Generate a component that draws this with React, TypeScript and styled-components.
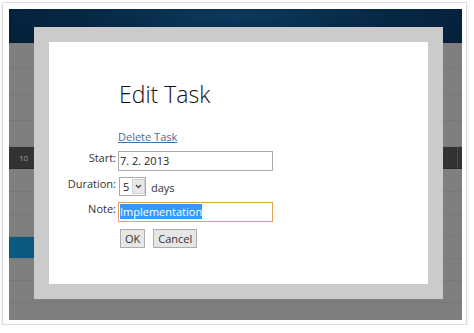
import React from 'react';
import styled, { createGlobalStyle } from 'styled-components';

const GlobalStyle = createGlobalStyle`
  html, body {
    margin: 0;
    padding: 0;
    background: #ffffff;
  }
  body {
    font-family: "Open Sans", "Noto Sans", Arial, sans-serif;
  }
`;

const Frame = styled.div`
  margin: 2px 0 0 2px;
  width: 465px;
  box-sizing: border-box;
  padding: 6px 4px 4px 6px;
  border: 1px solid #dcdcdc;
  box-shadow: 0 1px 3px rgba(0, 0, 0, 0.12);
  background: #ffffff;
`;

const Canvas = styled.div`
  position: relative;
  width: 453px;
  height: 311px;
  overflow: hidden;
  background: #7f7f7f;
  display: flex;
  flex-direction: column;
`;

const Header = styled.div`
  height: 34px;
  flex: none;
  background: radial-gradient(ellipse 60% 120% at 50% 20%, #0b3a5d 0%, #062845 55%, #041f39 100%);
`;

const Row = styled.div<{ $h: number; $tone?: 'dark' }>`
  flex: none;
  height: ${(p) => p.$h}px;
  box-sizing: border-box;
  display: flex;
  background: ${(p) => (p.$tone === 'dark' ? '#333333' : 'transparent')};
  border-bottom: 1px solid ${(p) => (p.$tone === 'dark' ? '#2a2a2a' : 'rgba(0, 0, 0, 0.05)')};
`;

const DayCell = styled.div<{ $w: number }>`
  width: ${(p) => p.$w}px;
  flex: none;
  box-sizing: border-box;
  border-right: 1px solid #474747;
  padding-left: 10px;
  font-size: 8px;
  line-height: 21px;
  color: #9a9a9a;
`;

const TaskBar = styled.div<{ $w: number }>`
  width: ${(p) => p.$w}px;
  height: 100%;
  background: #0a5a80;
`;

const Modal = styled.div`
  position: absolute;
  left: 25px;
  top: 18px;
  width: 409px;
  height: 272px;
  box-sizing: border-box;
  border: 15px solid #cbcbcb;
  background: #ffffff;
  padding-top: 38px;
`;

const Form = styled.div`
  display: grid;
  grid-template-columns: 67px 1fr;
  column-gap: 2px;
  row-gap: 6px;
  font-size: 11px;
  color: #333333;
`;

const Title = styled.h1`
  grid-column: 2;
  margin: 0 0 15px 1px;
  font-size: 23px;
  line-height: 28px;
  font-weight: 300;
  color: #111111;
`;

const DeleteLink = styled.a`
  grid-column: 2;
  justify-self: start;
  margin-bottom: 1px;
  line-height: 15px;
  color: #3a6fb6;
  text-decoration: underline;
  cursor: pointer;
`;

const Label = styled.label`
  grid-column: 1;
  text-align: right;
  line-height: 14px;
  color: #333333;
`;

const Field = styled.div`
  grid-column: 2;
  display: flex;
  align-items: center;
`;

const TextField = styled.div<{ $focused?: boolean }>`
  width: 155px;
  height: 20px;
  box-sizing: border-box;
  border: 1px solid ${(p) => (p.$focused ? '#e2a54c' : '#ababab')};
  padding: 1px 1px 0;
  line-height: 16px;
  color: #222222;
  white-space: nowrap;
`;

const Selected = styled.span`
  background: #3399ff;
  color: #ffffff;
`;

const SelectBox = styled.div`
  margin-left: 1px;
  width: 27px;
  height: 19px;
  box-sizing: border-box;
  border: 1px solid #a9a9a9;
  display: flex;
  align-items: stretch;
  background: #ffffff;
`;

const SelectValue = styled.span`
  flex: 1;
  padding-left: 3px;
  line-height: 17px;
  color: #222222;
`;

const SelectArrow = styled.span`
  width: 13px;
  margin: 1px 0;
  box-sizing: border-box;
  border: 1px solid #cfcfcf;
  background: #e8e8e8;
  display: flex;
  align-items: center;
  justify-content: center;
`;

const Unit = styled.span`
  margin-left: 5px;
  line-height: 17px;
  padding-top: 2px;
  color: #333333;
`;

const Buttons = styled.div`
  grid-column: 2;
  display: flex;
  gap: 8px;
  margin-top: 1px;
  padding-left: 2px;
`;

const Button = styled.button`
  height: 19px;
  box-sizing: border-box;
  padding: 0 4px;
  border: 1px solid #adadad;
  background: #e6e6e6;
  font-family: inherit;
  font-size: 11px;
  line-height: 17px;
  color: #333333;
`;

const Chevron: React.FC = () => (
  <svg width="7" height="5" viewBox="0 0 7 5">
    <path d="M1 1 L3.5 3.5 L6 1" fill="none" stroke="#4a4a4a" strokeWidth="1.4" />
  </svg>
);

const App: React.FC = () => {
  return (
    <>
      <GlobalStyle />
      <Frame>
        <Canvas>
          <Header />
          <Row $h={26} />
          <Row $h={26} />
          <Row $h={26} />
          <Row $h={26} />
          <Row $h={22} $tone="dark">
            <DayCell $w={449}>10</DayCell>
          </Row>
          <Row $h={23} />
          <Row $h={23} />
          <Row $h={22} />
          <Row $h={22}>
            <TaskBar $w={60} />
          </Row>
          <Row $h={22} />
          <Row $h={22} />
          <Row $h={22} />

          <Modal>
            <Form>
              <Title>Edit Task</Title>
              <DeleteLink>Delete Task</DeleteLink>

              <Label>Start:</Label>
              <Field>
                <TextField>7. 2. 2013</TextField>
              </Field>

              <Label>Duration:</Label>
              <Field>
                <SelectBox>
                  <SelectValue>5</SelectValue>
                  <SelectArrow>
                    <Chevron />
                  </SelectArrow>
                </SelectBox>
                <Unit>days</Unit>
              </Field>

              <Label>Note:</Label>
              <Field>
                <TextField $focused>
                  <Selected>Implementation</Selected>
                </TextField>
              </Field>

              <Buttons>
                <Button>OK</Button>
                <Button>Cancel</Button>
              </Buttons>
            </Form>
          </Modal>
        </Canvas>
      </Frame>
    </>
  );
};

export default App;
